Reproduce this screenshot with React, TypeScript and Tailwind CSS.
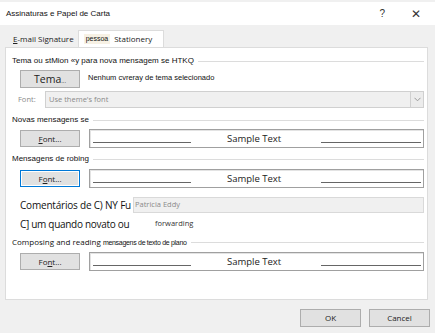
import React from 'react'

function GroupHeader({ label, className = '' }: { label: React.ReactNode; className?: string }) {
  return (
    <div className={`flex items-center h-[10px] ${className}`}>
      <span className="text-[8px] text-[#111] whitespace-nowrap leading-none">{label}</span>
      <div className="flex-1 h-px bg-[#dcdcdc] ml-[4px]" />
    </div>
  )
}

function DlgButton({
  children,
  focused = false,
  className = ''
}: {
  children: React.ReactNode
  focused?: boolean
  className?: string
}) {
  return (
    <div
      className={`flex items-center justify-center w-[60px] bg-[#e1e1e1] border ${
        focused ? 'border-[#0078d7] shadow-[inset_0_0_0_1px_#ffffff]' : 'border-[#adadad]'
      } text-[#222] leading-none ${className}`}
    >
      {children}
    </div>
  )
}

function SampleBox({ className = '' }: { className?: string }) {
  return (
    <div
      className={`flex-1 flex items-center bg-white border border-[#a0a0a0] shadow-[inset_1px_1px_0_#e3e3e3] ${className}`}
    >
      <div className="w-[98px] h-px bg-[#666] ml-[3px] mt-[8px]" />
      <span className="ml-[36px] text-[9.5px] text-[#222] leading-none font-['Open_Sans',sans-serif]">
        Sample Text
      </span>
      <div className="ml-auto w-[100px] h-px bg-[#666] mr-[2px] mt-[8px]" />
    </div>
  )
}

function FontRow({ ul, focused = false, className = '' }: { ul: number; focused?: boolean; className?: string }) {
  const letters = 'Font'.split('')
  return (
    <div className={`flex items-center gap-[9px] pl-[8px] ${className}`}>
      <DlgButton focused={focused} className="h-[17px] text-[8px] font-['Open_Sans',sans-serif]">
        {letters.map((c, i) => (
          <span key={i} className={i === ul ? 'underline' : ''}>
            {c}
          </span>
        ))}
        ...
      </DlgButton>
      <SampleBox className="h-[19px]" />
    </div>
  )
}

export default function App() {
  return (
    <div className="w-[435px] h-[333px] bg-[#f0f0f0] flex flex-col overflow-hidden font-['Liberation_Sans',Arial,sans-serif] text-[#111]">
      {/* Title bar */}
      <div className="h-[23px] bg-white flex items-center pl-[6px] pr-[14px] mt-[2px]">
        <span className="text-[8px] leading-none">Assinaturas e Papel de Carta</span>
        <span className="ml-auto text-[10px] text-[#333] leading-none">?</span>
        <span className="ml-[26px] text-[12px] text-[#333] leading-none">✕</span>
      </div>

      {/* Tabs */}
      <div className="h-[22px] flex items-end px-[5px] font-['Open_Sans',sans-serif]">
        <div className="h-[17px] flex items-center pl-[8px] pr-[4px] text-[8px] text-[#222]">
          <span className="underline">E</span>-mail Signature
        </div>
        <div className="h-[17px] bg-white flex items-center pl-[5px] pr-[11px] border-t border-x border-[#dcdcdc]">
          <span className="text-[7px] bg-[#f7f1e4] px-[2px] leading-[10px] font-['Liberation_Sans',Arial,sans-serif]">pessoa</span>
          <span className="ml-[4px] text-[8px] text-[#222]">Stationery</span>
        </div>
      </div>

      {/* Panel */}
      <div className="mx-[5px] w-[423px] h-[253px] bg-white border border-[#dcdcdc] flex flex-col pl-[6px] pr-[3px]">
        <GroupHeader label="Tema ou stMion «y para nova mensagem se HTKQ" className="mt-[8px]" />

        <div className="flex items-center pl-[8px] mt-[4px] h-[18px]">
          <DlgButton className="h-[18px] text-[10.5px] font-['Open_Sans',sans-serif]">
            Tema<span className="text-[6px] mt-[3px]">...</span>
          </DlgButton>
          <span className="ml-[8px] text-[7.5px] leading-none mb-[2px]">Nenhum cvreray de tema selecionado</span>
        </div>

        <div className="flex items-center mt-[3px] h-[17px] pl-[6px] font-['Open_Sans',sans-serif]">
          <span className="text-[7.5px] text-[#8a8a8a] w-[27px]">Font:</span>
          <div className="flex-1 h-[17px] bg-[#f0f0f0] border border-[#d0d0d0] flex items-center pl-[3px]">
            <span className="text-[7.5px] text-[#8a8a8a]">Use theme's font</span>
            <div className="ml-auto w-[13px] h-[15px] border-l border-[#d0d0d0] flex items-center justify-center bg-[#ececec]">
              <svg width="7" height="5" viewBox="0 0 7 5">
                <path d="M0.5 0.8 L3.5 3.8 L6.5 0.8" fill="none" stroke="#9a9a9a" strokeWidth="1" />
              </svg>
            </div>
          </div>
        </div>

        <GroupHeader label="Novas mensagens se" className="mt-[7px]" />
        <FontRow ul={0} className="mt-[4px]" />

        <GroupHeader label="Mensagens de robing" className="mt-[6px]" />
        <FontRow ul={1} focused className="mt-[5px]" />

        <div className="flex items-center pl-[8px] mt-[8px] h-[17px]">
          <span className="text-[10px] leading-none whitespace-nowrap font-['Open_Sans',sans-serif] w-[113px] tracking-[-0.2px]">
            Comentários de C) NY Fu
          </span>
          <div className="flex-1 h-[16px] bg-[#f0f0f0] border border-[#d9d9d9] flex items-center pl-[1px]">
            <span className="text-[7.5px] text-[#8a8a8a] font-['Open_Sans',sans-serif]">Patricia Eddy</span>
          </div>
        </div>

        <div className="flex items-center pl-[8px] mt-[3px] h-[16px]">
          <span className="text-[10px] leading-none whitespace-nowrap font-['Open_Sans',sans-serif] w-[135px] tracking-[-0.3px]">
            C] um quando novato ou
          </span>
          <span className="text-[7.5px] text-[#333] font-['Open_Sans',sans-serif]">forwarding</span>
        </div>

        <GroupHeader
          label={
            <>
              <span className="font-['Open_Sans',sans-serif]">Composing and reading </span>
              <span className="text-[7px] tracking-[-0.3px]">mensagens de texto de plano</span>
            </>
          }
          className="mt-[5px]"
        />
        <FontRow ul={2} className="mt-[5px]" />
      </div>

      {/* Footer */}
      <div className="flex justify-end gap-[8px] pr-[5px] mt-[9px] font-['Open_Sans',sans-serif]">
        <DlgButton className="h-[18px] w-[61px] text-[8px]">OK</DlgButton>
        <DlgButton className="h-[18px] w-[61px] text-[8px]">Cancel</DlgButton>
      </div>
    </div>
  )
}
